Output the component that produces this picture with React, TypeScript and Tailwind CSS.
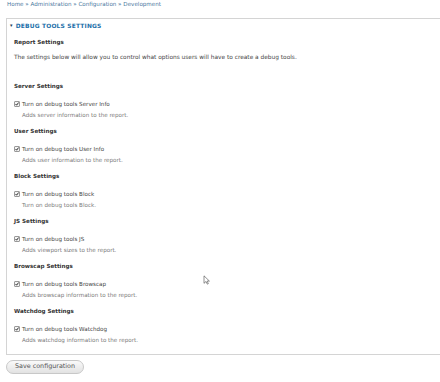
import React from 'react';

type Section = { title: string; label: string; desc: string };

const sections: Section[] = [
  { title: 'Server Settings', label: 'Turn on debug tools Server Info', desc: 'Adds server information to the report.' },
  { title: 'User Settings', label: 'Turn on debug tools User Info', desc: 'Adds user information to the report.' },
  { title: 'Block Settings', label: 'Turn on debug tools Block', desc: 'Turn on debug tools Block.' },
  { title: 'JS Settings', label: 'Turn on debug tools JS', desc: 'Adds viewport sizes to the report.' },
  { title: 'Browscap Settings', label: 'Turn on debug tools Browscap', desc: 'Adds browscap information to the report.' },
  { title: 'Watchdog Settings', label: 'Turn on debug tools Watchdog', desc: 'Adds watchdog information to the report.' },
];

function Check() {
  return (
    <span className="flex h-[6px] w-[6px] items-center justify-center rounded-[1px] border border-[#999] bg-[#f4f4f4]">
      <svg viewBox="0 0 6 6" className="h-[6px] w-[6px]">
        <path d="M0.8 3 L2.4 4.8 L5.4 0.8" fill="none" stroke="#222" strokeWidth="1.4" />
      </svg>
    </span>
  );
}

function SettingGroup({ s }: { s: Section }) {
  return (
    <div className="mb-[6px] flex flex-col">
      <div className="flex h-[10px] items-center font-bold text-[#333]">{s.title}</div>
      <div className="mt-[8px] flex h-[10px] items-center gap-[2px]">
        <Check />
        <span className="text-[#444]">{s.label}</span>
      </div>
      <div className="mt-[1px] flex h-[10px] items-center pl-[8px] text-[#7a7a7a]">{s.desc}</div>
    </div>
  );
}

export default function App() {
  return (
    <div
      className="h-[382px] w-[440px] overflow-hidden bg-white text-[5.6px]"
      style={{ fontFamily: '"DejaVu Sans", Verdana, sans-serif' }}
    >
      <div className="flex h-[9px] items-center pl-[7px] text-[#4a78a0]">
        Home » Administration » Configuration » Development
      </div>

      <div className="relative ml-[6px] mt-[9px] w-[460px] border border-[#d4d4d4]">
        <div className="flex h-[13px] items-center gap-[3px] pl-[3px] pt-[1px] text-[5.9px] font-bold uppercase tracking-[0.2px] text-[#1a6ea8]">
          <span className="text-[5px] text-[#1a3a5a]">▾</span>
          <span>Debug Tools Settings</span>
        </div>

        <div className="flex flex-col pl-[7px]">
          <div className="flex h-[16px] items-center pt-[4px] font-bold text-[#333]">Report Settings</div>
          <div className="flex h-[18px] items-center text-[5.85px] text-[#444]">
            The settings below will allow you to control what options users will have to create a debug tools.
          </div>
          <div className="h-[15px]" />
          {sections.map((s) => (
            <SettingGroup key={s.title} s={s} />
          ))}
          <div className="h-[3px]" />
        </div>

        <svg viewBox="0 0 8 12" className="absolute left-[196px] top-[256px] h-[10px] w-[7px]">
          <path d="M1 1 L1 10 L3.4 7.8 L5 11 L6.2 10.4 L4.7 7.3 L7.5 7.3 Z" fill="#fff" stroke="#444" strokeWidth="0.7" />
        </svg>
      </div>

      <div className="ml-[6px] mt-[5px]">
        <button
          type="button"
          className="h-[14px] w-[78px] rounded-full border border-[#c8c8c8] bg-gradient-to-b from-[#fafafa] to-[#e2e2e2] text-[6.4px] text-[#555]"
        >
          Save configuration
        </button>
      </div>
    </div>
  );
}
